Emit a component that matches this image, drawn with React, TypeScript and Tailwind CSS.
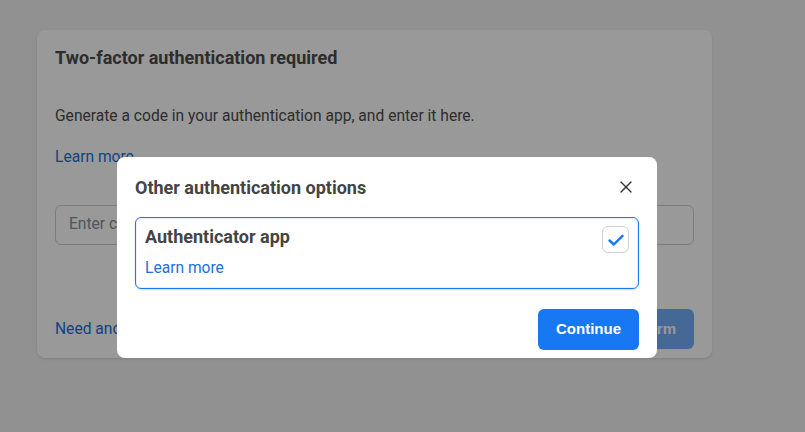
import { X } from 'lucide-react';

const roboto = { fontFamily: 'Roboto, "Liberation Sans", sans-serif' };

export default function App() {
  return (
    <div className="relative h-[432px] w-[805px] overflow-hidden bg-[#f2f2f2]" style={roboto}>
      {/* Page card */}
      <div className="pl-[37px] pt-[30px]">
        <div className="flex h-[328px] w-[675px] flex-col rounded-lg bg-white px-[18px] shadow-sm">
          <h1 className="mt-[17px] text-[18px] leading-[22px] font-bold text-[#4b4b4b]">
            Two-factor authentication required
          </h1>
          <p className="mt-[37px] text-[15.6px] leading-[20px] text-[#4b4b4b]">
            Generate a code in your authentication app, and enter it here.
          </p>
          <a className="mt-[21px] text-[15.6px] leading-[20px] text-[#216fdb]">Learn more</a>
          <div className="mt-[38px] flex h-[40px] items-center rounded-md border border-[#ccd0d5] px-[13px] text-[15.6px] text-[#8a8d91]">
            Enter code
          </div>
          <div className="mt-[64px] flex items-center justify-between">
            <a className="text-[15.6px] leading-[20px] text-[#216fdb]">Need another way to authenticate?</a>
            <button
              className="h-[40px] rounded-md bg-[#1877f2] px-[18px] text-[15px] font-bold text-white opacity-60"
              style={{ fontFamily: '"Liberation Sans", Arial, sans-serif' }}
            >
              Confirm
            </button>
          </div>
        </div>
      </div>

      {/* Overlay */}
      <div className="absolute inset-0 bg-black/40" />

      {/* Modal */}
      <div className="absolute left-[117px] top-[157px] w-[540px] rounded-lg bg-white px-[18px] pb-[8px]">
        <div className="flex h-[60px] items-center justify-between">
          <h2 className="text-[18px] font-bold text-[#444]">Other authentication options</h2>
          <X className="mr-[3px] size-[20px] text-[#333]" strokeWidth={1.6} />
        </div>
        <div className="flex h-[72px] items-start justify-between rounded-md border border-[#1877f2] px-[9px] shadow-[inset_0_0_0_1px_#e7f0fd,0_1px_2px_rgba(0,0,0,0.15)]">
          <div className="flex flex-col">
            <span className="mt-[8px] text-[18px] leading-[22px] font-bold text-[#444]">Authenticator app</span>
            <a className="mt-[10px] text-[15.6px] leading-[20px] text-[#216fdb]">Learn more</a>
          </div>
          <div className="mt-[8px] flex size-[27px] items-center justify-center rounded-md border border-[#ccd0d5] bg-white">
            <svg width="18" height="18" viewBox="0 0 18 18" fill="none">
              <path d="M2.5 9.5L6.8 13.5L15.5 4.8" stroke="#1877f2" strokeWidth="2.4" strokeLinecap="round" strokeLinejoin="round" />
            </svg>
          </div>
        </div>
        <div className="mt-[20px] flex justify-end">
          <button
            className="h-[41px] rounded-md bg-[#1877f2] px-[18px] text-[15px] font-bold text-white"
            style={{ fontFamily: '"Liberation Sans", Arial, sans-serif' }}
          >
            Continue
          </button>
        </div>
      </div>
    </div>
  );
}
